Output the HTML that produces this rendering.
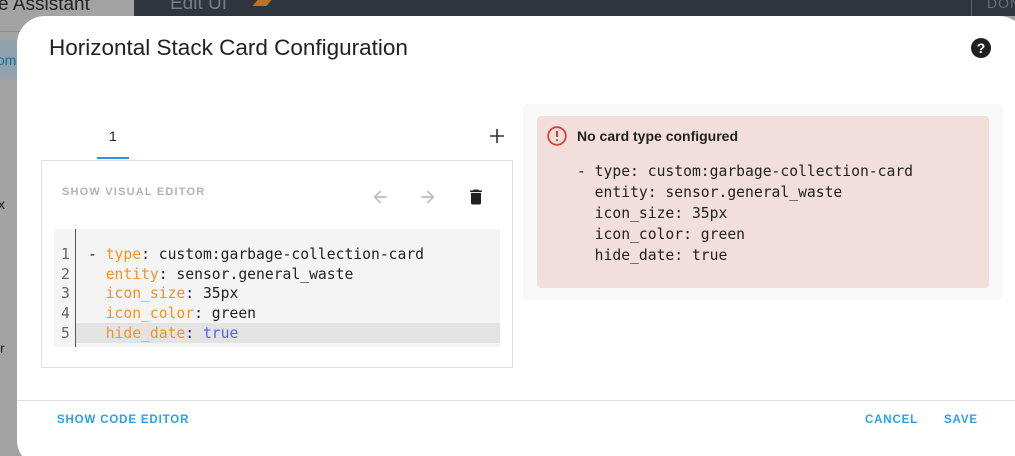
<!DOCTYPE html>
<html><head><meta charset="utf-8"><style>
*{margin:0;padding:0;box-sizing:border-box}
html,body{width:1015px;height:456px;overflow:hidden}
body{position:relative;background:#a3a3a3;font-family:"Liberation Sans",sans-serif}
.abs{position:absolute}
.mono{font-family:"DejaVu Sans Mono","Liberation Mono",monospace}
.btn{position:absolute;font-size:11.5px;font-weight:bold;letter-spacing:0.85px;color:#2aa0ee}
</style></head><body>
<div class="abs" style="left:0;top:0;width:134px;height:16px;background:#a3a3a3"></div>
<div class="abs" style="left:-2px;top:-6px;font-size:19px;color:#222">e Assistant</div>
<div class="abs" style="left:0;top:31px;width:20px;height:1px;background:#8a8a8a"></div>
<div class="abs" style="left:0;top:40px;width:20px;height:38px;background:#8fa2ad"></div>
<div class="abs" style="left:-3px;top:52px;font-size:14px;color:#1c6fa8">om</div>
<div class="abs" style="left:-2px;top:196px;font-size:14px;color:#222">x</div>
<div class="abs" style="left:0;top:340px;font-size:14px;color:#222">r</div>
<div class="abs" style="left:134px;top:0;width:881px;height:16px;background:#2f353d"></div>
<div class="abs" style="left:170px;top:-7px;font-size:19px;color:#777c84">Edit UI</div>
<div class="abs" style="left:255px;top:0;width:14px;height:6px;background:#c0701f;transform:skewX(-40deg)"></div>
<div class="abs" style="left:971px;top:0;width:1px;height:16px;background:#5a6068"></div>
<div class="abs" style="left:987px;top:-5px;font-size:14px;color:#6a7078;letter-spacing:1px">DON</div>

<div class="abs" style="left:17px;top:16px;width:1010px;height:452px;background:#fff;border-radius:28px"></div>
<div class="abs" style="left:49px;top:35px;font-size:22.5px;color:#212121">Horizontal Stack Card Configuration</div>
<svg class="abs" style="left:971px;top:38px" width="20" height="20" viewBox="0 0 20 20"><circle cx="10" cy="10" r="10" fill="#212121"/><text x="10" y="15" text-anchor="middle" font-size="14" font-weight="bold" fill="#fff" font-family="Liberation Sans">?</text></svg>

<div class="abs" style="left:109px;top:128px;font-size:14px;color:#212121">1</div>
<div class="abs" style="left:97px;top:157px;width:32px;height:2px;background:#2196f3"></div>
<svg class="abs" style="left:489px;top:128px" width="16" height="16"><path d="M8 1v14M1 8h14" stroke="#333" stroke-width="1.6"/></svg>
<div class="abs" style="left:41px;top:160px;width:472px;height:208px;border:1px solid #e0e0e0"></div>
<div class="abs" style="left:62px;top:186px;font-size:11px;font-weight:bold;letter-spacing:1.2px;color:#b3b3b3">SHOW VISUAL EDITOR</div>
<svg class="abs" style="left:370px;top:187px" width="20" height="20" viewBox="0 0 24 24"><path d="M20 11v2H8l5.5 5.5-1.4 1.4L4.2 12l7.9-7.9 1.4 1.4L8 11z" fill="#bdbdbd"/></svg>
<svg class="abs" style="left:418px;top:187px" width="20" height="20" viewBox="0 0 24 24"><path d="M4 11v2h12l-5.5 5.5 1.4 1.4 7.9-7.9-7.9-7.9-1.4 1.4L16 11z" fill="#bdbdbd"/></svg>
<svg class="abs" style="left:466px;top:187px" width="20" height="20" viewBox="0 0 24 24"><path d="M19 4h-3.5l-1-1h-5l-1 1H5v2h14zM6 19a2 2 0 0 0 2 2h8a2 2 0 0 0 2-2V7H6z" fill="#212121"/></svg>

<div class="abs" style="left:54px;top:229px;width:446px;height:118px;background:#f4f4f4;border-radius:3px 3px 0 0"></div>
<div class="abs" style="left:75px;top:323px;width:425px;height:20px;background:#e3e3e3"></div>
<div class="abs" style="left:75px;top:229px;width:1px;height:118px;background:#555"></div>
<div class="abs mono" style="left:61px;top:245px;font-size:14.7px;line-height:19.7px;color:#666">1<br>2<br>3<br>4<br>5</div>
<div class="abs mono" style="left:88px;top:245px;font-size:14.7px;line-height:19.7px;color:#222;white-space:pre">- <span style="color:#f39324">type</span>: custom:garbage-collection-card
  <span style="color:#f39324">entity</span>: sensor.general_waste
  <span style="color:#f39324">icon_size</span>: 35px
  <span style="color:#f39324">icon_color</span>: green
  <span style="color:#f39324">hide_date</span>: <span style="color:#5a5ef5">true</span></div>

<div class="abs" style="left:523px;top:104px;width:480px;height:196px;background:#f8f8f8;border-radius:4px"></div>
<div class="abs" style="left:537px;top:116px;width:452px;height:172px;background:#f2dfdc;border-radius:4px"></div>
<svg class="abs" style="left:547px;top:126px" width="20" height="20" viewBox="0 0 20 20"><circle cx="10" cy="10" r="8.8" fill="none" stroke="#d9412f" stroke-width="1.8"/><path d="M10 5v6" stroke="#d9412f" stroke-width="2"/><circle cx="10" cy="14.2" r="1.1" fill="#d9412f"/></svg>
<div class="abs" style="left:577px;top:128px;font-size:14px;font-weight:bold;color:#212121">No card type configured</div>
<div class="abs mono" style="left:577px;top:161px;font-size:14.7px;line-height:21px;color:#212121;white-space:pre">- type: custom:garbage-collection-card
  entity: sensor.general_waste
  icon_size: 35px
  icon_color: green
  hide_date: true</div>

<div class="abs" style="left:17px;top:400px;width:998px;height:1px;background:#e0e0e0"></div>
<div class="btn" style="left:57px;top:414px">SHOW CODE EDITOR</div>
<div class="btn" style="left:865px;top:414px">CANCEL</div>
<div class="btn" style="left:944px;top:414px">SAVE</div>
</body></html>
